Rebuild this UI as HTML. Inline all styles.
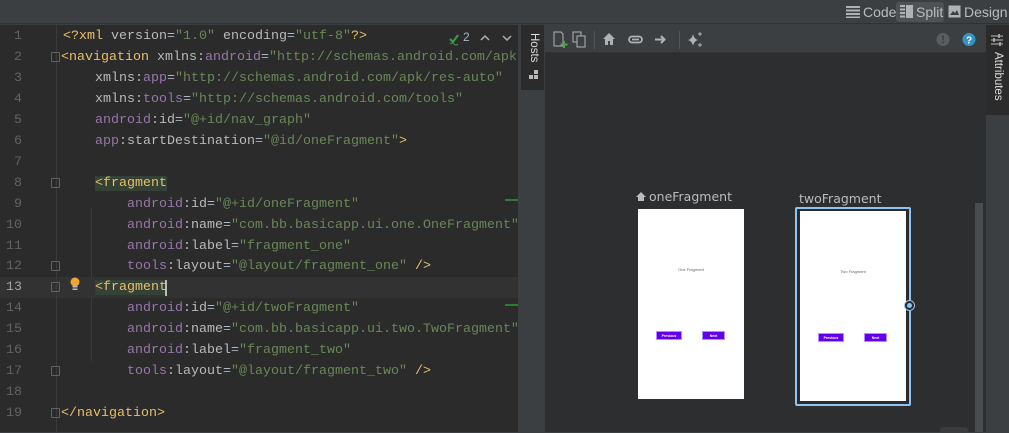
<!DOCTYPE html><html><head><meta charset="utf-8"><style>
*{margin:0;padding:0;box-sizing:border-box}
body{width:1009px;height:432px;overflow:hidden;background:#3c3f41;font-family:"Liberation Sans",sans-serif;position:relative}
.abs{position:absolute}
#ed{position:absolute;left:0;top:25px;width:518px;height:407px;background:#2b2b2b;overflow:hidden}
.ln{position:absolute;left:0;width:22px;text-align:right;font:13.33px "Liberation Mono",monospace;color:#606366;height:21px;line-height:21px}
.cl{position:absolute;left:63px;white-space:pre;font:13.33px "Liberation Mono",monospace;color:#a9b7c6;height:21px;line-height:21px}
.t{color:#e8bf6a}.a{color:#bababa}.n{color:#9876aa}.v{color:#6a8759}
.hl{background:#344134}
.fold{position:absolute;left:51px;width:9px;height:10px;border:1px solid #606366;border-radius:1px}
.w{position:absolute;background:#fff}
.btn{position:absolute;background:#6200ee;color:#fff;font:bold 3.5px sans-serif;text-align:center;line-height:8px;height:9px;border:1px solid #b58cff}
</style></head><body>
<div class="abs" style="left:0;top:0;width:1009px;height:24px;background:#3c3f41;border-bottom:1px solid #323232"></div>
<div class="abs" style="left:896px;top:2px;width:48px;height:20px;background:#4e5254;border-radius:3px"></div>
<svg class="abs" style="left:846px;top:6px" width="14" height="12"><g fill="#afb1b3"><rect y="0" width="14" height="2"/><rect y="3.5" width="14" height="2"/><rect y="7" width="14" height="2"/><rect y="10.5" width="14" height="1.5"/></g></svg>
<div class="abs" style="left:863px;top:4px;font-size:14px;color:#bbbbbb">Code</div>
<svg class="abs" style="left:900px;top:5px" width="13" height="14"><g fill="#afb1b3"><rect x="0" y="0" width="5" height="2"/><rect x="0" y="3.5" width="5" height="2"/><rect x="0" y="7" width="5" height="2"/><rect x="0" y="10.5" width="5" height="2"/><rect x="6" y="0" width="7" height="13"/></g></svg>
<div class="abs" style="left:916px;top:4px;font-size:14px;color:#bbbbbb">Split</div>
<svg class="abs" style="left:948px;top:5px" width="13" height="13"><rect x="0.5" y="0.5" width="12" height="12" fill="#afb1b3"/><path d="M2 10 L5 6 L7 8 L9 5 L11 10Z" fill="#3c3f41"/></svg>
<div class="abs" style="left:964px;top:4px;font-size:14px;color:#bbbbbb">Design</div>

<div id="ed">
<div class="abs" style="left:0;top:252px;width:518px;height:21px;background:#323232"></div>
<div class="abs" style="left:56px;top:0;width:1px;height:407px;background:#3a3a3a"></div>
<div class="abs" style="left:91px;top:183px;width:1px;height:21px;background:#3b3b3b"></div>
<div class="abs" style="left:91px;top:273px;width:1px;height:63px;background:#3b3b3b"></div>
<div class="abs" style="left:91px;top:194px;width:1px;height:58px;background:#3b3b3b"></div>
<div class="abs" style="left:505px;top:174px;width:13px;height:2px;background:#2d7d33"></div>
<div class="abs" style="left:505px;top:279px;width:13px;height:2px;background:#2d7d33"></div>
<div id="lines"></div>
<svg class="abs" style="left:449px;top:6px" width="22" height="16"><path d="M1 8 L4 11 L9 4" stroke="#3e9c46" stroke-width="2" fill="none"/><path d="M1 13 q2-2 4 0 q2 2 4 0" stroke="#3e9c46" fill="none"/></svg>
<div class="abs" style="left:463px;top:5px;font:12px 'Liberation Sans';color:#a9b7c6">2</div>
<svg class="abs" style="left:480px;top:9px" width="40" height="8"><path d="M1 6 L5 2 L9 6" stroke="#afb1b3" stroke-width="1.5" fill="none"/><path d="M23 2 L27 6 L31 2" stroke="#afb1b3" stroke-width="1.5" fill="none"/></svg>
<svg class="abs" style="left:69px;top:252px" width="12" height="14"><circle cx="6" cy="5" r="4.5" fill="#f0a732"/><rect x="3.5" y="9" width="5" height="1.5" fill="#bbb"/><rect x="3.5" y="11.5" width="5" height="1.5" fill="#bbb"/></svg>
</div>

<div class="abs" style="left:521px;top:25px;width:23px;height:65px;background:#2b2b2b"></div>
<div class="abs" style="left:540px;top:33px;transform:rotate(90deg);transform-origin:0 0;font-size:11.5px;color:#dddddd">Hosts</div>
<svg class="abs" style="left:529px;top:70px" width="10" height="9"><g fill="#bbb"><rect x="5" y="0" width="4" height="4"/><rect x="0" y="5" width="4" height="4"/><rect x="5" y="5" width="4" height="4"/></g></svg>

<div class="abs" style="left:545px;top:25px;width:441px;height:407px;background:#2d2e30"></div>
<div class="abs" style="left:545px;top:25px;width:441px;height:28px;background:#3c3f41;border-bottom:1px solid #323232"></div>
<svg class="abs" style="left:553px;top:31px" width="170" height="18">
<path d="M1 1 h7 l2 2 v12 h-9z" stroke="#afb1b3" fill="none"/><path d="M11 10 v7 M7.5 13.5 h7" stroke="#4fa54f" stroke-width="2"/>
<rect x="20" y="1" width="8" height="10" stroke="#afb1b3" fill="none"/><rect x="24" y="5" width="8" height="11" stroke="#afb1b3" fill="#3c3f41"/>
<rect x="41" y="0" width="1" height="18" fill="#555"/>
<path d="M50 8 L56 2 L62 8 h-2 v6 h-3 v-4 h-2 v4 h-3 v-6z" fill="#afb1b3"/>
<rect x="76" y="5.5" width="13" height="6" rx="3" stroke="#afb1b3" stroke-width="1.7" fill="none"/><path d="M79 8.5 h7" stroke="#afb1b3" stroke-width="1.7"/>
<path d="M102 8.5 h9 M108 5 l3.5 3.5 -3.5 3.5" stroke="#afb1b3" stroke-width="2" fill="none"/>
<rect x="126" y="0" width="1" height="18" fill="#555"/>
<path d="M140 3 q1 5 5 6 q-4 1 -5 6 q-1 -5 -5 -6 q4 -1 5 -6z" fill="#afb1b3"/><path d="M147 1 v4 M145 3 h4 M147 12 v4 M145 14 h4" stroke="#afb1b3"/>
</svg>
<svg class="abs" style="left:936px;top:32px" width="40" height="16"><circle cx="7" cy="7.5" r="6.5" fill="#5a5c5e"/><rect x="6.2" y="3.5" width="1.6" height="5" fill="#3c3f41"/><rect x="6.2" y="9.5" width="1.6" height="1.6" fill="#3c3f41"/><circle cx="33" cy="7.5" r="6.5" fill="#3592c4"/><text x="33" y="11.5" font-size="10" font-weight="bold" text-anchor="middle" fill="#fff" font-family="Liberation Sans">?</text></svg>
<div class="abs" style="left:975px;top:203px;width:8px;height:229px;background:#4a4c4e"></div>
<div class="abs" style="left:940px;top:427px;width:28px;height:6px;background:#3a3c3e;border-radius:3px"></div>

<svg class="abs" style="left:636px;top:192px" width="10" height="10"><path d="M0 5 L5 0 L10 5 h-2 v4 h-6 v-4z" fill="#bbbbbb"/></svg>
<div class="abs" style="left:649px;top:189px;font:12.5px 'DejaVu Sans',sans-serif;color:#bbbbbb">oneFragment</div>
<div class="w" style="left:638px;top:209px;width:106px;height:190px"></div>
<div class="abs" style="left:638px;top:267px;width:106px;text-align:center;font:4px sans-serif;color:#666">One Fragment</div>
<div class="btn" style="left:656px;top:331px;width:26px">Previous</div>
<div class="btn" style="left:702px;top:331px;width:23px">Next</div>

<div class="abs" style="left:799px;top:191px;font:12.5px 'DejaVu Sans',sans-serif;color:#bbbbbb">twoFragment</div>
<div class="abs" style="left:795px;top:207px;width:116px;height:199px;border:2px solid #8ec4f3;border-radius:2px;background:#2b2b2b"></div>
<div class="w" style="left:800px;top:211px;width:106px;height:190px"></div>
<div class="abs" style="left:800px;top:269px;width:106px;text-align:center;font:4px sans-serif;color:#666">Two Fragment</div>
<div class="btn" style="left:818px;top:333px;width:26px">Previous</div>
<div class="btn" style="left:864px;top:333px;width:23px">Next</div>
<div class="abs" style="left:904px;top:300px;width:11px;height:11px;border-radius:50%;background:#2b2b2b;border:1.5px solid #8ec4f3"></div>
<div class="abs" style="left:907px;top:303px;width:5px;height:5px;border-radius:50%;background:#8ec4f3"></div>

<div class="abs" style="left:986px;top:25px;width:23px;height:90px;background:#2b2b2b"></div>
<svg class="abs" style="left:990px;top:33px" width="14" height="14"><path d="M1 3 h12 M1 7 h12 M1 11 h12" stroke="#bbb"/><path d="M9 1 v4 M4 5 v4 M10 9 v4" stroke="#bbb" stroke-width="1.5"/></svg>
<div class="abs" style="left:1004px;top:52px;transform:rotate(90deg);transform-origin:0 0;font-size:11.5px;color:#dddddd">Attributes</div>

<script>
var L=[
'<span class="t">&lt;?xml</span> <span class="a">version</span>=<span class="v">"1.0"</span> <span class="a">encoding</span>=<span class="v">"utf-8"</span><span class="t">?&gt;</span>',
'<span class="t">&lt;navigation</span> <span class="a">xmlns:</span><span class="n">android</span>=<span class="v">"http://schemas.android.com/apk</span>',
'    <span class="a">xmlns:</span><span class="n">app</span>=<span class="v">"http://schemas.android.com/apk/res-auto"</span>',
'    <span class="a">xmlns:</span><span class="n">tools</span>=<span class="v">"http://schemas.android.com/tools"</span>',
'    <span class="n">android</span><span class="a">:id</span>=<span class="v">"@+id/nav_graph"</span>',
'    <span class="n">app</span><span class="a">:startDestination</span>=<span class="v">"@id/oneFragment"</span><span class="t">&gt;</span>',
'',
'    <span class="t hl">&lt;fragment</span>',
'        <span class="n">android</span><span class="a">:id</span>=<span class="v">"@+id/oneFragment"</span>',
'        <span class="n">android</span><span class="a">:name</span>=<span class="v">"com.bb.basicapp.ui.one.OneFragment"</span>',
'        <span class="n">android</span><span class="a">:label</span>=<span class="v">"fragment_one"</span>',
'        <span class="n">tools</span><span class="a">:layout</span>=<span class="v">"@layout/fragment_one"</span> <span class="t">/&gt;</span>',
'    <span class="t hl">&lt;fragment</span>',
'        <span class="n">android</span><span class="a">:id</span>=<span class="v">"@+id/twoFragment"</span>',
'        <span class="n">android</span><span class="a">:name</span>=<span class="v">"com.bb.basicapp.ui.two.TwoFragment"</span>',
'        <span class="n">android</span><span class="a">:label</span>=<span class="v">"fragment_two"</span>',
'        <span class="n">tools</span><span class="a">:layout</span>=<span class="v">"@layout/fragment_two"</span> <span class="t">/&gt;</span>',
'',
'<span class="t">&lt;/navigation&gt;</span>'];
var h='',folds=[2,8,12,13,17,19];
for(var i=0;i<L.length;i++){var y=i*20.95+1;
h+='<div class="ln" style="top:'+y+'px;'+(i==12?'color:#a4a3a3':'')+'">'+(i+1)+'</div>';
h+='<div class="cl" style="top:'+y+'px;'+(i==1||i==18?'left:61px':'')+'">'+L[i]+'</div>';
if(folds.indexOf(i+1)>=0)h+='<div class="fold" style="top:'+(y+5)+'px"></div>';}
h+='<div class="abs" style="left:165px;top:255px;width:2px;height:16px;background:#bbb"></div>';
document.getElementById('lines').innerHTML=h;
</script>
</body></html>
